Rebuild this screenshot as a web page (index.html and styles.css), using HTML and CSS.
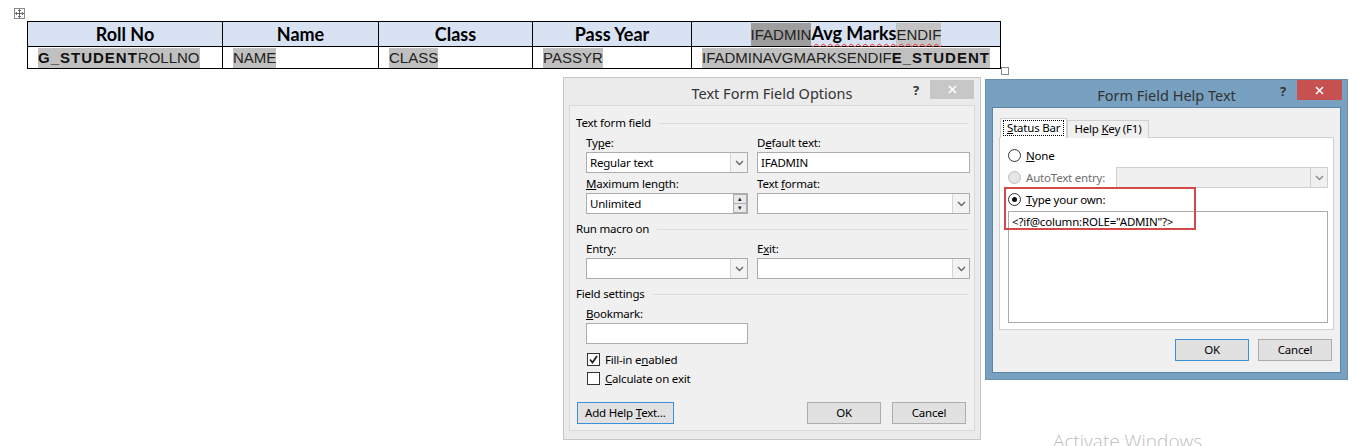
FILE: index.html
```html
<!DOCTYPE html>
<html lang="en">
<head>
  <meta charset="UTF-8" />
  <title>Text Form Field Options</title>
  <link rel="stylesheet" href="styles.css">
</head>
<body>
  <div class="doc">
    <span class="move-handle">
      <svg width="9" height="9" viewBox="0 0 9 9"><path d="M4.5 0.5v8M0.5 4.5h8M3 2l1.5-1.5L6 2M3 7l1.5 1.5L6 7M2 3L0.5 4.5 2 6M7 3l1.5 1.5L7 6" stroke="#444" stroke-width="0.8" fill="none"/></svg>
    </span>
    <table class="word-table">
      <tr class="head-row">
        <th class="c1">Roll No</th>
        <th class="c2">Name</th>
        <th class="c3">Class</th>
        <th class="c4">Pass Year</th>
        <th class="c5"><span class="fld dark">IFADMIN</span><span class="squig">Avg Marks</span><span class="fld light squig">ENDIF</span></th>
      </tr>
      <tr class="data-row">
        <td><span class="fld"><b>G_STUDENT</b>ROLLNO</span></td>
        <td><span class="fld">NAME</span></td>
        <td><span class="fld">CLASS</span></td>
        <td><span class="fld">PASSYR</span></td>
        <td><span class="fld">IFADMINAVGMARKSENDIF<b>E_STUDENT</b></span></td>
      </tr>
    </table>
    <span class="resize-handle"></span>
  </div>

  <!-- dialog 1 (inactive) -->
  <div class="dialog dlg-options">
    <div class="titlebar">
      <span class="title">Text Form Field Options</span>
      <span class="help">?</span>
      <span class="close">
        <svg width="9" height="9" viewBox="0 0 9 9"><path d="M1 1l7 7M8 1l-7 7" stroke="#fff" stroke-width="1.5"/></svg>
      </span>
    </div>
    <div class="panel">
      <div class="group-head"><span>Text form field</span></div>
      <div class="field-grid">
        <div class="field">
          <div class="lbl">Ty<u>p</u>e:</div>
          <div class="select">Regular text<span class="drop"><svg width="9" height="6" viewBox="0 0 9 6"><path d="M1 1l3.5 3.5L8 1" stroke="#666" stroke-width="1.4" fill="none"/></svg></span></div>
        </div>
        <div class="field">
          <div class="lbl">D<u>e</u>fault text:</div>
          <div class="input">IFADMIN</div>
        </div>
        <div class="field">
          <div class="lbl"><u>M</u>aximum length:</div>
          <div class="input spin">Unlimited<span class="spinner"><span class="sp-btn">&#9652;</span><span class="sp-btn">&#9662;</span></span></div>
        </div>
        <div class="field">
          <div class="lbl">Text <u>f</u>ormat:</div>
          <div class="select"><span class="drop"><svg width="9" height="6" viewBox="0 0 9 6"><path d="M1 1l3.5 3.5L8 1" stroke="#666" stroke-width="1.4" fill="none"/></svg></span></div>
        </div>
      </div>

      <div class="group-head g2"><span>Run macro on</span></div>
      <div class="field-grid">
        <div class="field">
          <div class="lbl">Entr<u>y</u>:</div>
          <div class="select"><span class="drop"><svg width="9" height="6" viewBox="0 0 9 6"><path d="M1 1l3.5 3.5L8 1" stroke="#666" stroke-width="1.4" fill="none"/></svg></span></div>
        </div>
        <div class="field">
          <div class="lbl">E<u>x</u>it:</div>
          <div class="select"><span class="drop"><svg width="9" height="6" viewBox="0 0 9 6"><path d="M1 1l3.5 3.5L8 1" stroke="#666" stroke-width="1.4" fill="none"/></svg></span></div>
        </div>
      </div>

      <div class="group-head g2"><span>Field settings</span></div>
      <div class="field-grid">
        <div class="field">
          <div class="lbl"><u>B</u>ookmark:</div>
          <div class="input"></div>
        </div>
      </div>
      <div class="check-row first">
        <span class="checkbox"><svg width="9" height="9" viewBox="0 0 9 9"><path d="M1 4.5l2.5 3L8 1" stroke="#222" stroke-width="1.8" fill="none"/></svg></span>
        <span>Fill-in e<u>n</u>abled</span>
      </div>
      <div class="check-row">
        <span class="checkbox"></span>
        <span><u>C</u>alculate on exit</span>
      </div>

      <div class="btn-row">
        <button class="btn default">Add Help <u>T</u>ext...</button>
        <span class="spacer"></span>
        <button class="btn">OK</button>
        <button class="btn">Cancel</button>
      </div>
    </div>
  </div>

  <!-- dialog 2 (active) -->
  <div class="dialog dlg-help">
    <div class="titlebar">
      <span class="title">Form Field Help Text</span>
      <span class="help">?</span>
      <span class="close">
        <svg width="9" height="9" viewBox="0 0 9 9"><path d="M1 1l7 7M8 1l-7 7" stroke="#fff" stroke-width="1.5"/></svg>
      </span>
    </div>
    <div class="panel">
      <div class="tabs">
        <span class="tab active"><span class="focus"><u>S</u>tatus Bar</span></span>
        <span class="tab">Help <u>K</u>ey (F1)</span>
      </div>
      <div class="tab-panel">
        <div class="radio-row">
          <span class="radio"></span><span><u>N</u>one</span>
        </div>
        <div class="radio-row disabled">
          <span class="radio"></span><span class="auto-lbl">AutoText entry:</span>
          <span class="select off"><span class="drop"><svg width="9" height="6" viewBox="0 0 9 6"><path d="M1 1l3.5 3.5L8 1" stroke="#888" stroke-width="1.4" fill="none"/></svg></span></span>
        </div>
        <div class="radio-row">
          <span class="radio on"></span><span><u>T</u>ype your own:</span>
        </div>
        <div class="textarea">&lt;?if@column:ROLE="ADMIN"?&gt;</div>
      </div>
      <div class="btn-row right">
        <button class="btn default">OK</button>
        <button class="btn">Cancel</button>
      </div>
    </div>
  </div>

  <span class="mark-box"></span>

  <div class="activate">Activate Windows</div>
</body>
</html>
```

FILE: styles.css
```css
body {
  margin: 0;
  padding: 0;
  background: #fff;
  font-family: "Noto Sans", "Open Sans", sans-serif;
  color: #000;
  width: 1356px;
  height: 446px;
  overflow: hidden;
  position: relative;
}

/* word document table */
.doc {
  padding: 21px 0 0 27px;
  position: relative;
}

.move-handle {
  position: absolute;
  left: 14px;
  top: 8px;
  width: 9px;
  height: 9px;
  border: 1px solid #8a8a8a;
  background: #fff;
  display: flex;
  align-items: center;
  justify-content: center;
}

.resize-handle {
  position: absolute;
  left: 1001px;
  top: 67px;
  width: 6px;
  height: 6px;
  border: 1px solid #8a8a8a;
  background: #fff;
}

.word-table {
  border-collapse: collapse;
  table-layout: fixed;
  width: 974px;
}

.word-table th,
.word-table td {
  border: 1px solid #000;
  padding: 0;
  white-space: nowrap;
}

.word-table .c1 { width: 194px; }
.word-table .c2 { width: 155px; }
.word-table .c3 { width: 153px; }
.word-table .c4 { width: 158px; }

.head-row th {
  height: 23px;
  background: #d9e2f3;
  font-family: Lato, "Open Sans", sans-serif;
  font-weight: bold;
  font-size: 18px;
  text-align: center;
  vertical-align: middle;
}

.head-row .fld {
  display: inline-block;
  font-family: "Liberation Sans", Arial, sans-serif;
  font-weight: normal;
  font-size: 15px;
  line-height: 23px;
  color: #222;
}

.head-row .fld.dark {
  background: #9e9e9e;
}

.head-row .fld.light {
  background: #c4c4c4;
}

.squig {
  text-decoration: underline wavy #e03030;
  text-decoration-thickness: 1px;
  text-underline-offset: 3px;
}

.data-row td {
  height: 21px;
  padding-left: 10px;
  font-family: "Liberation Sans", Arial, sans-serif;
  font-size: 15px;
  color: #222;
  vertical-align: middle;
}

.data-row .fld {
  display: inline-block;
  background: #c0c0c0;
  line-height: 20px;
}

.data-row b {
  letter-spacing: 1px;
  color: #111;
}

/* dialogs */
.dialog {
  position: absolute;
  box-sizing: border-box;
  font-size: 11.5px;
  letter-spacing: -0.2px;
  color: #000;
}

.dlg-options {
  left: 563px;
  top: 77px;
  width: 418px;
  height: 363px;
  background: #ebebeb;
  border: 1px solid #c6c6c6;
}

.dlg-help {
  left: 985px;
  top: 79px;
  width: 363px;
  height: 301px;
  background: #78a1c1;
  border: 1px solid #6a90ae;
}

.titlebar {
  position: relative;
  height: 27px;
  text-align: center;
}

.title {
  font-size: 14.5px;
  letter-spacing: 0;
  line-height: 31px;
  color: #333;
}

.help {
  position: absolute;
  right: 61px;
  top: 3px;
  font-size: 13px;
  font-weight: bold;
  color: #333;
}

.close {
  position: absolute;
  right: 6px;
  top: 2px;
  width: 44px;
  height: 19px;
  background: #c7c7c7;
  display: flex;
  align-items: center;
  justify-content: center;
}

.dlg-help .help {
  right: 61px;
  top: 2px;
}

.dlg-help .close {
  top: 0;
  right: 5px;
  width: 45px;
  height: 20px;
  background: #c75050;
}

.panel {
  background: #f0f0f0;
  border: 1px solid #d8d8d8;
  margin: 0 5px;
  height: 326px;
  box-sizing: border-box;
  padding: 10px 0 0 0;
}

.dlg-help .panel {
  margin: 0 6px;
  height: 266px;
  border-color: #5d86a6;
  padding: 12px 0 0 6px;
}

.group-head {
  display: flex;
  align-items: center;
  padding: 0 6px;
  height: 14px;
  line-height: 14px;
}

.group-head::after {
  content: "";
  flex: 1;
  height: 1px;
  background: #dcdcdc;
  margin-left: 8px;
}

.group-head.g2 {
  margin-top: 8px;
}

.field-grid {
  display: grid;
  grid-template-columns: 162px 213px;
  column-gap: 9px;
  row-gap: 4px;
  padding: 0 0 0 16px;
  margin-top: 6px;
}

.lbl {
  height: 14px;
  line-height: 14px;
  margin-bottom: 2px;
}

u {
  text-underline-offset: 1px;
}

.select,
.input {
  position: relative;
  box-sizing: border-box;
  height: 21px;
  background: #fff;
  border: 1px solid #acacac;
  padding-left: 3px;
  line-height: 19px;
}

.drop {
  position: absolute;
  right: 0;
  top: 0;
  width: 16px;
  height: 19px;
  background: #f3f3f3;
  border-left: 1px solid #d4d4d4;
  display: flex;
  align-items: center;
  justify-content: center;
}

.spinner {
  position: absolute;
  right: 0;
  top: 0;
  width: 14px;
  height: 19px;
  display: flex;
  flex-direction: column;
}

.sp-btn {
  flex: 1;
  background: #e8e8e8;
  border: 1px solid #adadad;
  font-size: 7px;
  line-height: 7px;
  text-align: center;
  color: #222;
}

.sp-btn + .sp-btn {
  border-top: none;
}

.check-row {
  display: flex;
  align-items: center;
  gap: 5px;
  height: 14px;
  margin-top: 5px;
  padding-left: 17px;
}

.check-row.first {
  margin-top: 8px;
}

.checkbox {
  width: 11px;
  height: 11px;
  border: 1px solid #333;
  background: #fff;
  display: flex;
  align-items: center;
  justify-content: center;
}

.btn-row {
  display: flex;
  gap: 11px;
  margin-top: 17px;
  padding: 0 8px 0 7px;
}

.spacer {
  flex: 1;
}

.btn {
  font-family: "Noto Sans", "Open Sans", sans-serif;
  font-size: 11.5px;
  letter-spacing: -0.2px;
  height: 22px;
  min-width: 74px;
  padding: 0 7px;
  background: #e1e1e1;
  border: 1px solid #adadad;
  color: #000;
  line-height: 18px;
}

.btn.default {
  border-color: #3c8fd8;
}

/* tabs */
.tabs {
  display: flex;
  align-items: flex-end;
  height: 18px;
  padding-left: 1px;
}

.tab {
  height: 17px;
  line-height: 16px;
  padding: 0 6px;
  border: 1px solid #d0d0d0;
  border-bottom: none;
  background: #f0f0f0;
}

.tab.active {
  height: 19px;
  background: #fff;
  padding: 0 2px;
  position: relative;
  z-index: 1;
}

.focus {
  display: inline-block;
  border: 1px dotted #000;
  padding: 0 3px;
  line-height: 14px;
  margin-top: 1px;
}

.tab-panel {
  width: 335px;
  height: 193px;
  box-sizing: border-box;
  background: #fff;
  border: 1px solid #d0d0d0;
  margin-top: -1px;
  padding: 7px 0 0 8px;
}

.radio-row {
  display: flex;
  align-items: center;
  gap: 5px;
  height: 21px;
  margin-bottom: 1px;
  white-space: nowrap;
}

.radio {
  width: 11px;
  height: 11px;
  border: 1px solid #333;
  border-radius: 50%;
  background: #fff;
  position: relative;
}

.radio.on::after {
  content: "";
  position: absolute;
  left: 3px;
  top: 3px;
  width: 5px;
  height: 5px;
  border-radius: 50%;
  background: #111;
}

.radio-row.disabled {
  color: #6d6d6d;
}

.radio-row.disabled .radio {
  border-color: #bcbcbc;
  background: #e6e6e6;
}

.auto-lbl {
  width: 85px;
  flex-shrink: 0;
}

.select.off {
  width: 212px;
  background: #f0f0f0;
  border-color: #cfcfcf;
}

.select.off .drop {
  background: #f0f0f0;
  border-left-color: #cfcfcf;
}

.textarea {
  box-sizing: border-box;
  width: 320px;
  height: 112px;
  border: 1px solid #aaa;
  background: #fff;
  padding: 2px 0 0 3px;
  line-height: 16px;
}

.btn-row.right {
  justify-content: flex-end;
  margin-top: 9px;
  padding: 0 8px 0 0;
  gap: 9px;
}

/* annotation over the help dialog */
.mark-box {
  position: absolute;
  left: 1004px;
  top: 187px;
  width: 188px;
  height: 39px;
  border: 2px solid #d44a4a;
}

.activate {
  position: absolute;
  left: 1053px;
  top: 428px;
  font-family: "Open Sans", sans-serif;
  font-weight: 300;
  font-size: 19px;
  color: #bdbdbd;
}
```
